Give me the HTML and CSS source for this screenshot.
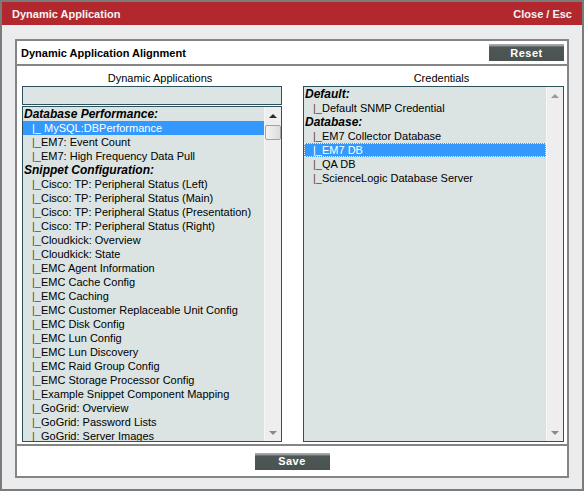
FILE: index.html
```html
<!DOCTYPE html>
<html lang="en">
<head>
<meta charset="UTF-8"/>
<title>Dynamic Application</title>
<link rel="stylesheet" href="styles.css">
</head>
<body>

<div class="titlebar">
  <span>Dynamic Application</span>
  <span>Close / Esc</span>
</div>

<div class="panel">
  <div class="panel-head">
    <span>Dynamic Application Alignment</span>
    <button class="btn">Reset</button>
  </div>

  <div class="columns">
    <div class="col">
      <div class="col-label">Dynamic Applications</div>
      <div class="filter"></div>
      <div class="list list-short">
        <div class="items">
          <div class="group">Database Performance:</div>
          <div class="item selected"><b>|_</b> MySQL:DBPerformance</div>
          <div class="item"><b>|_</b>EM7: Event Count</div>
          <div class="item"><b>|_</b>EM7: High Frequency Data Pull</div>
          <div class="group">Snippet Configuration:</div>
          <div class="item"><b>|_</b>Cisco: TP: Peripheral Status (Left)</div>
          <div class="item"><b>|_</b>Cisco: TP: Peripheral Status (Main)</div>
          <div class="item"><b>|_</b>Cisco: TP: Peripheral Status (Presentation)</div>
          <div class="item"><b>|_</b>Cisco: TP: Peripheral Status (Right)</div>
          <div class="item"><b>|_</b>Cloudkick: Overview</div>
          <div class="item"><b>|_</b>Cloudkick: State</div>
          <div class="item"><b>|_</b>EMC Agent Information</div>
          <div class="item"><b>|_</b>EMC Cache Config</div>
          <div class="item"><b>|_</b>EMC Caching</div>
          <div class="item"><b>|_</b>EMC Customer Replaceable Unit Config</div>
          <div class="item"><b>|_</b>EMC Disk Config</div>
          <div class="item"><b>|_</b>EMC Lun Config</div>
          <div class="item"><b>|_</b>EMC Lun Discovery</div>
          <div class="item"><b>|_</b>EMC Raid Group Config</div>
          <div class="item"><b>|_</b>EMC Storage Processor Config</div>
          <div class="item"><b>|_</b>Example Snippet Component Mapping</div>
          <div class="item"><b>|_</b>GoGrid: Overview</div>
          <div class="item"><b>|_</b>GoGrid: Password Lists</div>
          <div class="item"><b>|_</b>GoGrid: Server Images</div>
        </div>
        <div class="sbar">
          <span class="arrow up"></span>
          <span class="thumb"></span>
          <span class="track"></span>
          <span class="arrow down off"></span>
        </div>
      </div>
    </div>

    <div class="col">
      <div class="col-label">Credentials</div>
      <div class="list list-tall">
        <div class="items">
          <div class="group">Default:</div>
          <div class="item"><b>|_</b>Default SNMP Credential</div>
          <div class="group">Database:</div>
          <div class="item"><b>|_</b>EM7 Collector Database</div>
          <div class="item selected focus"><b>|_</b>EM7 DB</div>
          <div class="item"><b>|_</b>QA DB</div>
          <div class="item"><b>|_</b>ScienceLogic Database Server</div>
        </div>
        <div class="sbar">
          <span class="arrow up off"></span>
          <span class="track"></span>
          <span class="arrow down off"></span>
        </div>
      </div>
    </div>
  </div>

  <div class="panel-foot">
    <button class="btn">Save</button>
  </div>
</div>

</body>
</html>
```

FILE: styles.css
```css
html { margin:0; }
body { margin:0; width:584px; height:491px; box-sizing:border-box; border:2px solid #7b7b7b; background:#ebeced; font-family:"Liberation Sans",Arial,sans-serif; font-size:11px; color:#000; overflow:hidden; }

.titlebar { height:23px; background:#b3282f; color:#f4f4f4; font-weight:bold; font-size:11px; display:flex; justify-content:space-between; align-items:center; padding:0 10px; }

.panel { margin:14px 13px 0 13px; border:2px solid #858585; background:#fff; }
.panel-head { height:23px; border-bottom:2px solid #858585; display:flex; justify-content:space-between; align-items:center; padding:0 3px 0 4px; font-weight:bold; }

.btn { width:75px; height:17px; border:0; padding:0; background:linear-gradient(#b0b4b4 0, #8e9393 2px, #4d5756 3px, #4a5352 100%); color:#fff; font-family:"Liberation Sans",Arial,sans-serif; font-weight:bold; font-size:11px; letter-spacing:.5px; cursor:pointer; }

.columns { display:grid; grid-template-columns:260px 261px; column-gap:21px; padding:0 3px 2px 5px; }
.col-label { height:20px; box-sizing:border-box; padding:5px 0 0 16px; line-height:14px; text-align:center; }

.filter { height:19px; box-sizing:border-box; border:1px solid #2c535d; background:#dce5e3; margin-bottom:1px; }

.list { display:flex; border:1px solid #2c535d; background:#dbe4e2; box-sizing:border-box; overflow:hidden; }
.list-short { height:336px; }
.list-tall { height:356px; }
.items { flex:1; min-width:0; overflow:hidden; }

.group { height:14px; line-height:14px; padding-left:1px; font-weight:bold; font-style:italic; font-size:12px; white-space:nowrap; }
.item { height:14px; line-height:14px; padding-left:9px; white-space:nowrap; box-sizing:border-box; }
.item b { font-weight:normal; color:#6e4619; }
.item.selected { background:#3399ff; color:#fff; }
.item.selected b { color:#fff; }
.item.focus { border:1px dotted #e8eef8; line-height:12px; padding-left:8px; }

.sbar { width:17px; flex:none; display:flex; flex-direction:column; background:#eeeeee; border-left:1px solid #f6f6f6; box-sizing:border-box; }
.arrow { height:17px; flex:none; display:flex; align-items:center; justify-content:center; }
.arrow::before { content:""; width:0; height:0; border-left:4px solid transparent; border-right:4px solid transparent; }
.arrow.up::before { border-bottom:4px solid #2a2a2a; }
.arrow.down::before { border-top:4px solid #2a2a2a; }
.arrow.up.off::before { border-bottom-color:#9a9a9a; }
.arrow.down.off::before { border-top-color:#8a8a8a; }
.thumb { height:15px; flex:none; margin:1px 0 0 0; border:1px solid #a2a2a2; border-radius:2px; background:linear-gradient(90deg, #f4f4f4, #dcdcdc); box-sizing:border-box; }
.track { flex:1; }

.panel-foot { height:30px; border-top:2px solid #858585; display:flex; justify-content:center; align-items:center; }
```
